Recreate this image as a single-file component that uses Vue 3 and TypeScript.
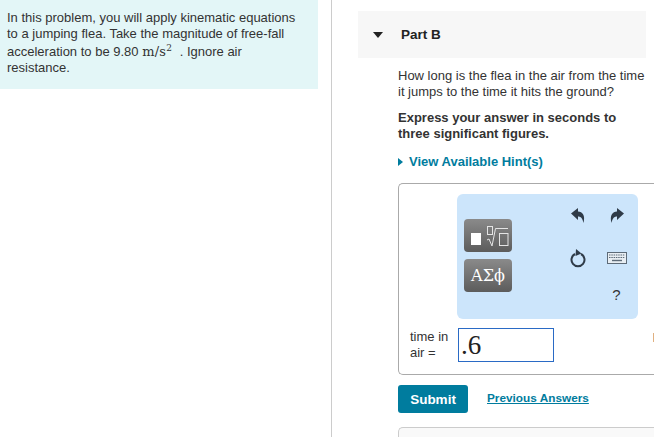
<script setup lang="ts">
const hintLabel = "View Available Hint(s)";
</script>

<template>
  <div class="page">
    <div class="left">
      <div class="intro">
        In this problem, you will apply kinematic equations to a jumping flea. Take the magnitude of free-fall
        acceleration to be 9.80 <span class="math">m/s<sup>2</sup></span> . Ignore air resistance.
      </div>
    </div>
    <div class="right">
      <div class="part-head">
        <span class="caret"></span>
        <span class="part-title">Part B</span>
      </div>
      <div class="part-body">
        <p class="question">How long is the flea in the air from the time it jumps to the time it hits the ground?</p>
        <p class="express">Express your answer in seconds to three significant figures.</p>
        <div class="hint"><span class="hint-caret"></span>{{ hintLabel }}</div>
        <div class="answer-box">
          <div class="palette">
            <div class="tool-col">
              <div class="tool">
                <svg width="48" height="33" viewBox="0 0 48 33">
                  <rect x="7" y="14" width="10" height="12" fill="#fff" />
                  <rect x="23.5" y="7.5" width="5" height="8" fill="none" stroke="#e4e4e4" />
                  <path d="M23 21l2 -1 3 7 3.5 -17.5h12.5" fill="none" stroke="#e4e4e4" />
                  <rect x="35.5" y="14.5" width="8.5" height="12" fill="none" stroke="#e4e4e4" />
                </svg>
              </div>
              <div class="tool greek">ΑΣϕ</div>
            </div>
            <div class="actions">
              <svg width="18" height="18" viewBox="0 0 18 18">
                <path d="M2 6.500L9 1v3.500c4.500 0 7.500 4 5.500 11.500c-1 -4.500 -2.500 -6.500 -5.500 -6.500V13z" fill="#2f3b48" />
              </svg>
              <svg width="18" height="18" viewBox="0 0 18 18">
                <path d="M16 6.500L9 1v3.500c-4.500 0 -7.500 4 -5.500 11.500c1 -4.500 2.500 -6.500 5.500 -6.500V13z" fill="#2f3b48" />
              </svg>
              <svg width="18" height="20" viewBox="0 0 18 20">
                <path d="M6 6a6.500 6.500 0 1 0 6 0" fill="none" stroke="#2f3b48" stroke-width="2" />
                <path d="M7 1l5.500 4.500 -6 2.500z" fill="#2f3b48" />
              </svg>
              <svg width="20" height="12" viewBox="0 0 20 12">
                <rect x="0.5" y="0.5" width="19" height="11" fill="#e8eef3" stroke="#5d6b78" />
                <path d="M2 3h16M2 5.500h16" stroke="#5d6b78" stroke-width="1.200" stroke-dasharray="1.500 0.800" />
                <path d="M5 8.500h10" stroke="#5d6b78" stroke-width="1.400" />
              </svg>
              <span></span>
              <span class="help">?</span>
            </div>
          </div>
          <div class="entry-row">
            <label class="entry-label">time in air =</label>
            <div class="entry">.6</div>
          </div>
          <span class="mark"></span>
        </div>
        <div class="submit-row">
          <button class="submit">Submit</button>
          <a class="prev">Previous Answers</a>
        </div>
        <div class="next-box"></div>
      </div>
    </div>
  </div>
</template>

<style scoped>
.page {
  display: flex;
  width: 654px;
  height: 437px;
  overflow: hidden;
  font-family: "Liberation Sans", Arial, sans-serif;
  font-size: 13px;
  line-height: 16px;
  color: #333;
  background: #fff;
}

.left {
  width: 332px;
  flex: none;
  border-right: 1px solid #ccc;
  box-sizing: border-box;
}

.intro {
  width: 318px;
  height: 89px;
  box-sizing: border-box;
  padding: 10px 21px 0 7px;
  background: #e3f6f7;
}

.math {
  margin-right: 4px;
  font-family: "DejaVu Serif", "Liberation Serif", serif;
  font-size: 13px;
  letter-spacing: 0.2px;
}

.math sup {
  font-size: 9px;
  line-height: 12px;
  vertical-align: 5px;
}

.right {
  flex: 1;
  min-width: 0;
  padding: 11px 8px 0 26px;
}

.part-head {
  display: flex;
  align-items: center;
  height: 47px;
  background: #f7f7f7;
}

.caret {
  width: 0;
  height: 0;
  margin-left: 15px;
  border-left: 5px solid transparent;
  border-right: 5px solid transparent;
  border-top: 6px solid #222;
}

.part-title {
  margin-left: 18px;
  font-size: 13.5px;
  font-weight: bold;
  color: #222;
}

.part-body {
  padding-left: 40px;
  margin-right: -8px;
}

.question {
  width: 250px;
  margin: 10px 0 0;
}

.express {
  width: 230px;
  margin: 10px 0 0;
  font-weight: bold;
}

.hint {
  display: flex;
  align-items: center;
  margin-top: 12px;
  font-weight: bold;
  color: #007c9e;
}

.hint-caret {
  width: 0;
  height: 0;
  margin-right: 6px;
  border-top: 4px solid transparent;
  border-bottom: 4px solid transparent;
  border-left: 5px solid #007c9e;
}

.answer-box {
  position: relative;
  width: 270px;
  height: 192px;
  margin-top: 13px;
  box-sizing: border-box;
  padding: 10px 0 0 58px;
  border: 1px solid #aaa;
  border-right: none;
  border-radius: 5px 0 0 5px;
}

.palette {
  display: flex;
  justify-content: space-between;
  width: 181px;
  height: 125px;
  box-sizing: border-box;
  padding: 25px 9px 0 7px;
  background: #cce5fb;
  border-radius: 6px;
}

.tool-col {
  display: flex;
  flex-direction: column;
  gap: 7px;
}

.tool {
  display: flex;
  align-items: center;
  justify-content: center;
  width: 48px;
  height: 33px;
  border-radius: 4px;
  background: linear-gradient(#8a8a8a, #5c5c5c);
  color: #fff;
}

.greek {
  font-family: "DejaVu Serif", serif;
  font-size: 16px;
}

.actions {
  display: grid;
  grid-template-columns: 39px 39px;
  grid-template-rows: 42px 42px 37px;
  align-items: center;
  justify-items: center;
  margin: -24px -7px 0 0;
}

.help {
  font-size: 15px;
  color: #333;
  margin-top: -5px;
}

.entry-row {
  display: flex;
  align-items: center;
  gap: 8px;
  margin: 9px 0 0 -47px;
}

.entry-label {
  width: 40px;
}

.entry {
  width: 96px;
  height: 34px;
  box-sizing: border-box;
  padding-left: 2px;
  border: 1px solid #2a6ac5;
  font-family: "Liberation Serif", serif;
  font-size: 27px;
  line-height: 33px;
  color: #222;
}

.mark {
  position: absolute;
  left: 254px;
  top: 149px;
  width: 1px;
  height: 9px;
  background: #e0b080;
}

.submit-row {
  display: flex;
  align-items: center;
  margin-top: 10px;
}

.submit {
  width: 70px;
  height: 28px;
  padding: 0;
  border: none;
  border-radius: 3px;
  background: #007c9e;
  color: #fff;
  font-family: inherit;
  font-size: 13.5px;
  font-weight: bold;
}

.prev {
  margin-left: 19px;
  margin-top: -2px;
  font-size: 11.8px;
  font-weight: bold;
  color: #007c9e;
  text-decoration: underline;
}

.next-box {
  width: 270px;
  height: 30px;
  margin-top: 14px;
  box-sizing: border-box;
  background: #f9f9f9;
  border: 1px solid #ccc;
  border-right: none;
  border-radius: 5px 0 0 0;
}
</style>
